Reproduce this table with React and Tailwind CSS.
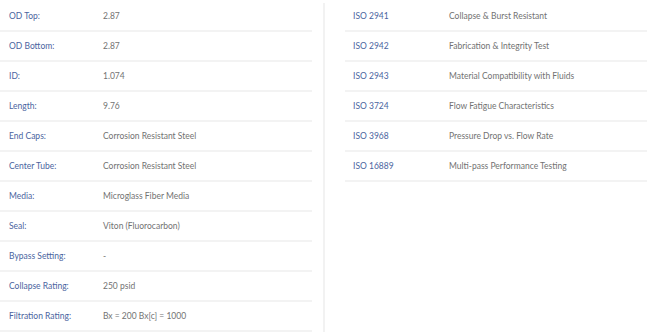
import React from 'react';

const specs = [
  ['OD Top:', '2.87'],
  ['OD Bottom:', '2.87'],
  ['ID:', '1.074'],
  ['Length:', '9.76'],
  ['End Caps:', 'Corrosion Resistant Steel'],
  ['Center Tube:', 'Corrosion Resistant Steel'],
  ['Media:', 'Microglass Fiber Media'],
  ['Seal:', 'Viton (Fluorocarbon)'],
  ['Bypass Setting:', '-'],
  ['Collapse Rating:', '250 psid'],
  ['Filtration Rating:', 'Bx = 200 Bx[c] = 1000'],
];

const standards = [
  ['ISO 2941', 'Collapse & Burst Resistant'],
  ['ISO 2942', 'Fabrication & Integrity Test'],
  ['ISO 2943', 'Material Compatibility with Fluids'],
  ['ISO 3724', 'Flow Fatigue Characteristics'],
  ['ISO 3968', 'Pressure Drop vs. Flow Rate'],
  ['ISO 16889', 'Multi-pass Performance Testing'],
];

const App = () => {
  return (
    <div className="w-[650px] h-[332px] bg-white flex font-['Lato',sans-serif] text-[8.5px] overflow-hidden">
      <div className="w-[312px] pt-[2px]">
        {specs.map(([label, value]) => (
          <div key={label} className="h-[30px] flex items-center border-b-2 border-[#f3f3f3]">
            <div className="w-[103px] pl-[9px] text-[#4a64a0]">{label}</div>
            <div className="text-[#727272]">{value}</div>
          </div>
        ))}
      </div>

      <div className="ml-[11px] mt-[3px] w-[2px] bg-[#f2f2f2]" />

      <div className="w-[302px] ml-[20px] pt-[2px]">
        {standards.map(([code, desc]) => (
          <div key={code} className="h-[30px] flex items-center border-b-2 border-[#f3f3f3]">
            <div className="w-[104px] pl-[8px] text-[#4a64a0]">{code}</div>
            <div className="text-[#727272]">{desc}</div>
          </div>
        ))}
      </div>
    </div>
  );
};

export default App;
